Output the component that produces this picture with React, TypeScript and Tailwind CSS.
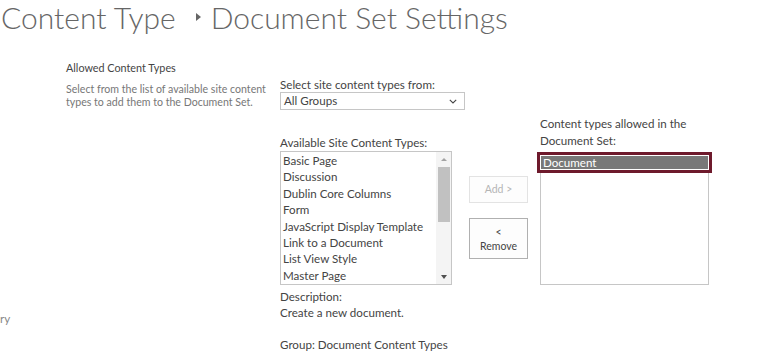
import React from "react";

const items = [
  "Basic Page",
  "Discussion",
  "Dublin Core Columns",
  "Form",
  "JavaScript Display Template",
  "Link to a Document",
  "List View Style",
  "Master Page",
];

export default function App() {
  return (
    <div
      className="w-[768px] h-[364px] overflow-hidden bg-white text-[#444444]"
      style={{ fontFamily: 'Lato, "Open Sans", sans-serif' }}
    >
      <div className="h-[60px] pl-[1px]">
        <h1 className="text-[30px] font-light leading-[34px] text-[#666666] whitespace-nowrap flex items-center">
          <span>Content Type</span>
          <span className="ml-[20px] mr-[10px] inline-block w-0 h-0 border-y-[4px] border-y-transparent border-l-[5px] border-l-[#666666]" />
          <span>Document Set Settings</span>
        </h1>
      </div>

      <div className="flex">
        <div className="w-[280px] shrink-0">
          <div className="pl-[66px]">
            <div className="text-[10.8px] leading-[16px] text-[#444444]">Allowed Content Types</div>
            <div className="mt-[7px] text-[10.6px] leading-[13px] text-[#777777] w-[200px]">
              Select from the list of available site content types to add them to the Document Set.
            </div>
          </div>
          <div className="mt-[202px] text-[11.6px] leading-[16px] text-[#888888]">ry</div>
        </div>

        <div className="w-[185px] shrink-0 text-[11.6px]">
          <div className="mt-[17px] leading-[16px]">Select site content types from:</div>
          <div className="mt-[-1px] h-[18px] border border-[#c6c6c6] flex items-center justify-between pl-[3px] pr-[7px]">
            <span className="leading-[16px]">All Groups</span>
            <svg width="8" height="5" viewBox="0 0 8 5">
              <path d="M0.8 0.8 L4 4 L7.2 0.8" fill="none" stroke="#444" strokeWidth="1.1" />
            </svg>
          </div>
          <div className="mt-[25px] leading-[16px]">Available Site Content Types:</div>
          <div className="mt-[0px] w-[172px] h-[134px] border border-[#c6c6c6] flex">
            <div className="flex-1 pl-[2px] pt-[1px]">
              {items.map((it) => (
                <div key={it} className="leading-[16.4px] whitespace-nowrap">
                  {it}
                </div>
              ))}
            </div>
            <div className="w-[15px] bg-[#f4f4f4] flex flex-col items-center">
              <div className="h-[15px] flex items-center justify-center">
                <div className="w-0 h-0 border-x-[3.5px] border-x-transparent border-b-[3px] border-b-[#a3a3a3]" />
              </div>
              <div className="w-[12px] h-[55px] bg-[#c1c1c1]" />
              <div className="flex-1" />
              <div className="h-[15px] flex items-center justify-center">
                <div className="w-0 h-0 border-x-[3.5px] border-x-transparent border-t-[4px] border-t-[#505050]" />
              </div>
            </div>
          </div>
          <div className="mt-[4px] leading-[16px]">Description:</div>
          <div className="leading-[16px]">Create a new document.</div>
          <div className="mt-[16px] leading-[16px] whitespace-nowrap">Group: Document Content Types</div>
        </div>

        <div className="ml-[4px] w-[59px] shrink-0 text-[10.5px]">
          <div className="mt-[116px] h-[27px] border border-[#e3e3e3] bg-[#fdfdfd] text-[#b5b5b5] flex items-center justify-center">
            Add &gt;
          </div>
          <div className="mt-[15px] h-[41px] border border-[#b0b0b0] bg-[#fdfdfd] text-[#444444] flex flex-col items-center justify-center leading-[14px]">
            <span>&lt;</span>
            <span>Remove</span>
          </div>
        </div>

        <div className="ml-[12px] w-[169px] shrink-0 text-[11.6px]">
          <div className="mt-[55px] leading-[17px]">Content types allowed in the</div>
          <div className="leading-[17px]">Document Set:</div>
          <div className="mt-[3px] h-[133px] border border-[#c6c6c6]">
            <div className="mx-[-4px] mt-[-1px] border-[3px] border-[#6e1a2c]">
              <div className="border border-white bg-[#787878] text-white leading-[13px] pl-[2px]">
                Document
              </div>
            </div>
          </div>
        </div>
      </div>
    </div>
  );
}
